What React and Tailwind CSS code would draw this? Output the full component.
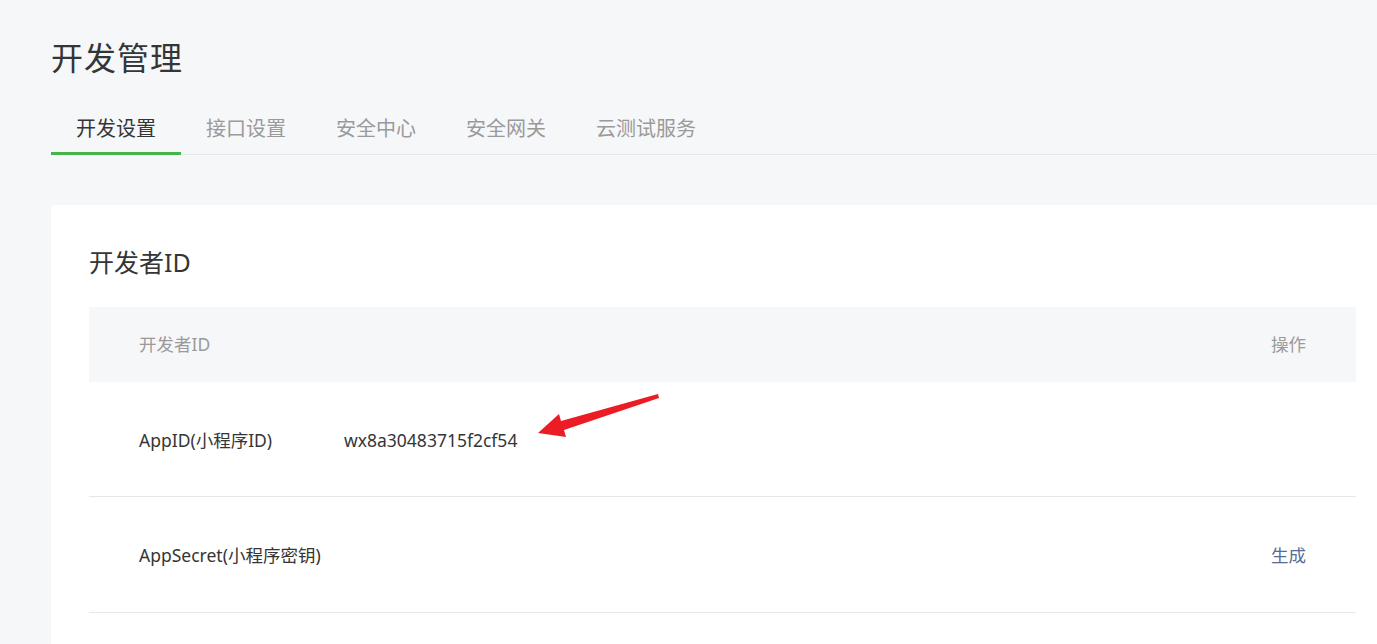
import React from "react";

const tabs = ["开发设置", "接口设置", "安全中心", "安全网关", "云测试服务"];

export default function App() {
  return (
    <div
      className="relative w-full min-h-[644px] overflow-hidden bg-[#f6f7f9] pl-[51px] text-[#353535]"
      style={{ fontFamily: '"Noto Sans", "Noto Sans CJK SC", sans-serif' }}
    >
      <h1 className="pt-[36px] text-[32px] leading-[44px] font-normal tracking-[1px]">开发管理</h1>

      <div className="mt-[34px] flex border-b border-[#e4e8eb]">
        {tabs.map((t, i) => (
          <div
            key={t}
            className={
              i === 0
                ? "-mb-px px-[25px] text-center text-[20px] leading-[28px] pt-[1px] pb-[9px] border-b-[3px] border-[#44b549] text-[#353535]"
                : "-mb-px px-[25px] text-center text-[20px] leading-[28px] pt-[1px] pb-[9px] border-b-[3px] border-transparent text-[#9a9a9a]"
            }
          >
            {t}
          </div>
        ))}
      </div>

      <div className="mt-[50px] w-[1343px] rounded-tl-[4px] rounded-tr-[4px] bg-white pt-[39px] pl-[38px] pr-[38px] pb-[40px]">
        <h2 className="text-[25px] leading-[36px] font-normal">开发者ID</h2>

        <div className="mt-[27px]">
          <div className="flex h-[75px] items-center justify-between bg-[#f6f7f9] px-[50px] text-[17.5px] text-[#9a9a9a]">
            <span>开发者ID</span>
            <span>操作</span>
          </div>

          <div className="relative flex h-[115px] items-center border-b border-[#e7e7e7] px-[50px] pt-[2px] text-[17.5px]">
            <span className="w-[205px]">AppID(小程序ID)</span>
            <span>wx8a30483715f2cf54</span>
            <svg
              className="absolute left-[441px] top-[8px]"
              width="135"
              height="55"
              viewBox="0 0 135 55"
            >
              <polygon
                points="8,43 29,24 31,31 128,4 129,8 34,40 36,47"
                fill="#ec1c24"
              />
            </svg>
          </div>

          <div className="flex h-[116px] items-center justify-between border-b border-[#e7e7e7] px-[50px] pt-[2px] text-[17.5px]">
            <span>AppSecret(小程序密钥)</span>
            <span className="text-[#576b95]">生成</span>
          </div>
        </div>
      </div>
    </div>
  );
}
